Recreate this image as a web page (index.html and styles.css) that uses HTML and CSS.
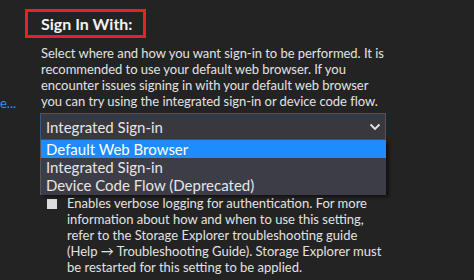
FILE: index.html
```html
<!DOCTYPE html>
<html lang="en">
<head>
  <meta charset="UTF-8">
  <meta name="viewport" content="width=device-width, initial-scale=1">
  <title>Settings - Sign In With</title>
  <link rel="stylesheet" href="styles.css">
</head>
<body>

<div class="page">
  <aside class="side">
    <a href="#" class="side-link">e...</a>
  </aside>

  <main class="main">
    <h2 class="setting-title">Sign In With:</h2>
    <p class="setting-desc">Select where and how you want sign-in to be performed. It is recommended to use your default web browser. If you encounter issues signing in with your default web browser<br>you can try using the integrated sign-in or device code flow.</p>

    <div class="select-wrap">
      <div class="select">
        <span>Integrated Sign-in</span>
        <svg class="chevron" width="12" height="8" viewBox="0 0 12 8">
          <path d="M1.5 1.5 L6 6 L10.5 1.5" fill="none" stroke="#e6e6e6" stroke-width="1.8"/>
        </svg>
      </div>
      <ul class="options">
        <li class="option active">Default Web Browser</li>
        <li class="option">Integrated Sign-in</li>
        <li class="option">Device Code Flow (Deprecated)</li>
      </ul>
    </div>

    <label class="check-row">
      <span class="checkbox"></span>
      <span class="check-text">Enables verbose logging for authentication. For more information about how and when to use this setting, refer to the Storage Explorer troubleshooting guide (Help &rarr; Troubleshooting Guide). Storage Explorer must be restarted for this setting to be applied.</span>
    </label>
  </main>
</div>

</body>
</html>
```

FILE: styles.css
```css
body {
  font-family: Lato, 'Noto Sans', sans-serif;
  margin: 0;
  background: #232324;
  color: #e2e2e2;
  overflow: hidden;
}
.page {
  display: flex;
  height: 280px;
}
.side {
  width: 40px;
  flex-shrink: 0;
  padding-top: 95px;
  box-sizing: border-box;
  font-size: 13px;
  line-height: 16px;
  overflow: hidden;
}
.side-link {
  color: #3a8ee6;
  text-decoration: none;
  white-space: nowrap;
}
.main {
  width: 346px;
  padding-top: 9px;
}
.setting-title {
  display: inline-block;
  margin: 0 0 0 -15px;
  padding: 0 10px 0 13px;
  border: 3px solid #e0232d;
  font-size: 16px;
  line-height: 23px;
  font-weight: bold;
  color: #f2f2f2;
}
.setting-desc {
  margin: 7px -8px 0 1px;
  font-size: 13px;
  line-height: 16px;
  letter-spacing: -0.04px;
}
.select-wrap {
  position: relative;
  margin-top: 4px;
}
.select {
  display: flex;
  align-items: center;
  justify-content: space-between;
  height: 27px;
  box-sizing: border-box;
  padding: 0 4px 0 5px;
  background: #38383e;
  border: 1px solid #2f5c85;
  font-size: 15px;
  color: #e6e6e6;
}
.options {
  position: absolute;
  top: 27px;
  left: 0;
  right: 0;
  margin: 0;
  padding: 0 0 1px;
  list-style: none;
  background: #3c3d47;
  border-left: 1px solid #54565f;
  box-shadow: 3px 2px 3px rgba(0,0,0,0.5);
}
.option {
  height: 18px;
  line-height: 18px;
  padding-left: 5px;
  font-size: 15px;
  color: #e6e6e6;
}
.option.active {
  background: #1c8cff;
  color: #ffffff;
}
.check-row {
  display: flex;
  gap: 10px;
  margin-top: 55px;
  padding-left: 7px;
}
.checkbox {
  flex-shrink: 0;
  width: 10px;
  height: 10px;
  margin-top: 4px;
  background: #dcdcdc;
}
.check-text {
  font-size: 13px;
  line-height: 16px;
}
```
